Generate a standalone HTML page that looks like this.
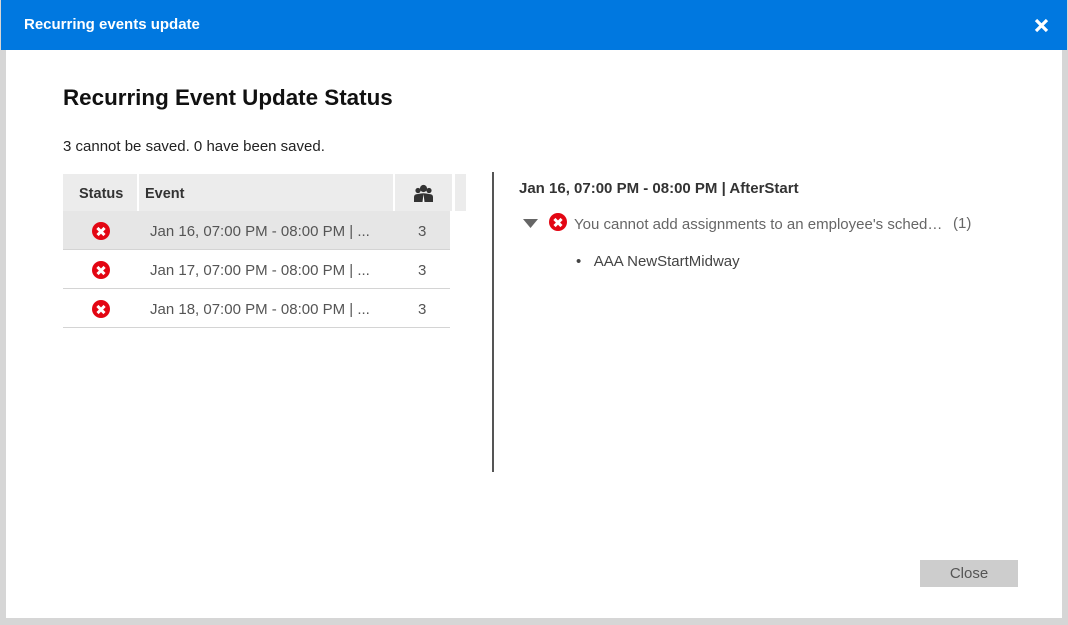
<!DOCTYPE html>
<html><head><style>
body{margin:0;width:1068px;height:625px;background:#d6d6d6;font-family:"Liberation Sans",Arial,sans-serif;position:relative;overflow:hidden}
.hdr{position:absolute;left:1px;top:0;width:1066px;height:50px;background:#0078e0;color:#fff;font-weight:bold;font-size:15px}
.hdr span{position:absolute;left:23px;top:16px}
.body{position:absolute;left:6px;top:50px;width:1056px;height:568px;background:#fff}
.a{position:absolute;white-space:nowrap}
.x{display:inline-block;width:18px;height:18px;border-radius:50%;background:#e30613;position:absolute}
.x:before,.x:after{content:"";position:absolute;left:4px;top:7.7px;width:10px;height:2.8px;background:#fff;transform:rotate(45deg)}
.x:after{transform:rotate(-45deg)}
.row{position:absolute;left:63px;width:387px;height:38px;border-bottom:1px solid #d4d4d4;font-size:15px;color:#555}
</style></head><body>
<div class="hdr"><span>Recurring events update</span>
<svg style="position:absolute;left:1033px;top:18px" width="15" height="15" viewBox="0 0 15 15"><path d="M2 2L13 13M13 2L2 13" stroke="#fff" stroke-width="3.2"/></svg></div>
<div class="body"></div>
<div class="a" style="left:63px;top:85px;font-size:22.4px;font-weight:bold;color:#111">Recurring Event Update Status</div>
<div class="a" style="left:63px;top:138px;font-size:15px;color:#222">3 cannot be saved. 0 have been saved.</div>
<div class="a" style="left:63px;top:174px;width:74px;height:37px;background:#ececec"></div>
<div class="a" style="left:139px;top:174px;width:254px;height:37px;background:#ececec"></div>
<div class="a" style="left:395px;top:174px;width:57px;height:37px;background:#ececec"></div>
<div class="a" style="left:455px;top:174px;width:11px;height:37px;background:#ececec"></div>
<div class="a" style="left:79px;top:186px;font-size:14.5px;font-weight:bold;color:#333">Status</div>
<div class="a" style="left:145px;top:186px;font-size:14.5px;font-weight:bold;color:#333">Event</div>
<svg class="a" style="left:413px;top:184px" width="21" height="19" viewBox="0 0 21 19"><circle cx="10.5" cy="4.5" r="3.6" fill="#333"/><circle cx="5" cy="6.5" r="2.6" fill="#333"/><circle cx="16" cy="6.5" r="2.6" fill="#333"/><path d="M1 18V13Q1 10 5 10Q10.5 8.5 16 10Q20 10 20 13V18Z" fill="#333"/><path d="M10.5 10L9.5 18H11.5Z" fill="#fff"/></svg>
<div class="row" style="top:211px;background:#e6e6e6"></div>
<div class="row" style="top:250px"></div>
<div class="row" style="top:289px"></div>
<i class="x" style="left:92px;top:222px"></i><i class="x" style="left:92px;top:261px"></i><i class="x" style="left:92px;top:300px"></i>
<div class="a" style="left:150px;top:223px;font-size:15px;color:#555">Jan 16, 07:00 PM - 08:00 PM | ...</div>
<div class="a" style="left:150px;top:262px;font-size:15px;color:#555">Jan 17, 07:00 PM - 08:00 PM | ...</div>
<div class="a" style="left:150px;top:301px;font-size:15px;color:#555">Jan 18, 07:00 PM - 08:00 PM | ...</div>
<div class="a" style="left:418px;top:223px;font-size:15px;color:#555">3</div>
<div class="a" style="left:418px;top:262px;font-size:15px;color:#555">3</div>
<div class="a" style="left:418px;top:301px;font-size:15px;color:#555">3</div>
<div class="a" style="left:492px;top:172px;width:2px;height:300px;background:#555"></div>
<div class="a" style="left:519px;top:180px;font-size:15px;font-weight:bold;color:#333">Jan 16, 07:00 PM - 08:00 PM | AfterStart</div>
<svg class="a" style="left:523px;top:219px" width="15" height="9"><path d="M0 0H15L7.5 9Z" fill="#666"/></svg>
<i class="x" style="left:549px;top:213px"></i>
<div class="a" style="left:574px;top:216px;font-size:15px;color:#666">You cannot add assignments to an employee's sched…</div>
<div class="a" style="left:953px;top:215px;font-size:15px;color:#666">(1)</div>
<div class="a" style="left:576px;top:253px;font-size:15px;color:#444">•&nbsp;&nbsp;&nbsp;AAA NewStartMidway</div>
<div class="a" style="left:920px;top:560px;width:98px;height:27px;background:#cdcdcd;color:#555;font-size:15px;text-align:center;line-height:27px">Close</div>
</body></html>
